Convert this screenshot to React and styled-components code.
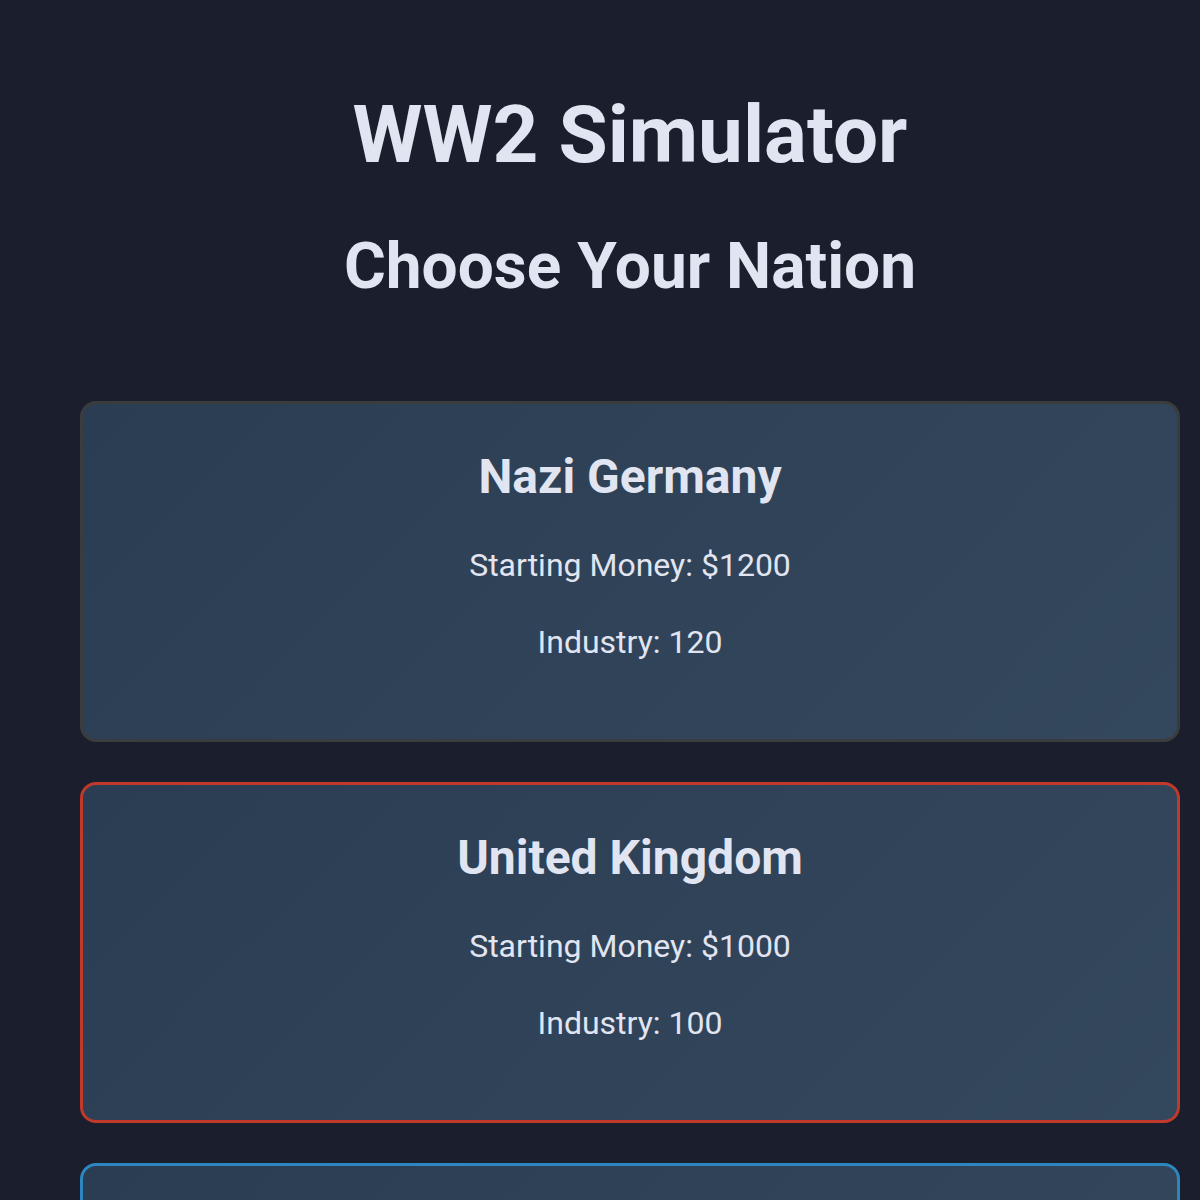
import React from 'react';
import styled, { createGlobalStyle } from 'styled-components';

const GlobalStyle = createGlobalStyle`
    html, body {
        margin: 0;
        padding: 0;
        background: #1b1f2d;
    }
    body {
        font-family: Roboto, "Liberation Sans", sans-serif;
        color: #e1e5f2;
    }
`;

const Page = styled.div`
    padding: 88px 20px 40px 80px;
    min-height: 1200px;
    box-sizing: border-box;
`;

const Title = styled.h1`
    margin: 0;
    text-align: center;
    font-size: 80px;
    font-weight: 700;
`;

const Subtitle = styled.h2`
    margin: 47px 0 0;
    text-align: center;
    font-size: 64px;
    font-weight: 700;
`;

const NationList = styled.div`
    display: flex;
    flex-direction: column;
    gap: 40px;
    margin-top: 97px;
`;

const NationCard = styled.div`
    box-sizing: border-box;
    height: 341px;
    padding: 44px 20px 0;
    border: 3px solid ${(p) => p.$border};
    border-radius: 16px;
    background: linear-gradient(135deg, #2b3d52 0%, #34485d 100%);
    text-align: center;
    cursor: pointer;
`;

const NationName = styled.h3`
    margin: 0;
    font-size: 48px;
    font-weight: 700;
`;

const Stat = styled.p`
    margin: ${(p) => (p.$first ? '41px' : '39px')} 0 0;
    font-size: 32px;
    font-weight: 400;
`;

const nations = [
    { name: 'Nazi Germany', money: 1200, industry: 120, border: '#3b3c3e' },
    { name: 'United Kingdom', money: 1000, industry: 100, border: '#c0392b' },
    { name: 'United States', money: 1500, industry: 150, border: '#2e86c1' },
];

const App = () => {
    return (
        <Page>
            <GlobalStyle />
            <Title>WW2 Simulator</Title>
            <Subtitle>Choose Your Nation</Subtitle>
            <NationList>
                {nations.map((n) => (
                    <NationCard key={n.name} $border={n.border}>
                        <NationName>{n.name}</NationName>
                        <Stat $first>Starting Money: ${n.money}</Stat>
                        <Stat>Industry: {n.industry}</Stat>
                    </NationCard>
                ))}
            </NationList>
        </Page>
    );
};

export default App;
